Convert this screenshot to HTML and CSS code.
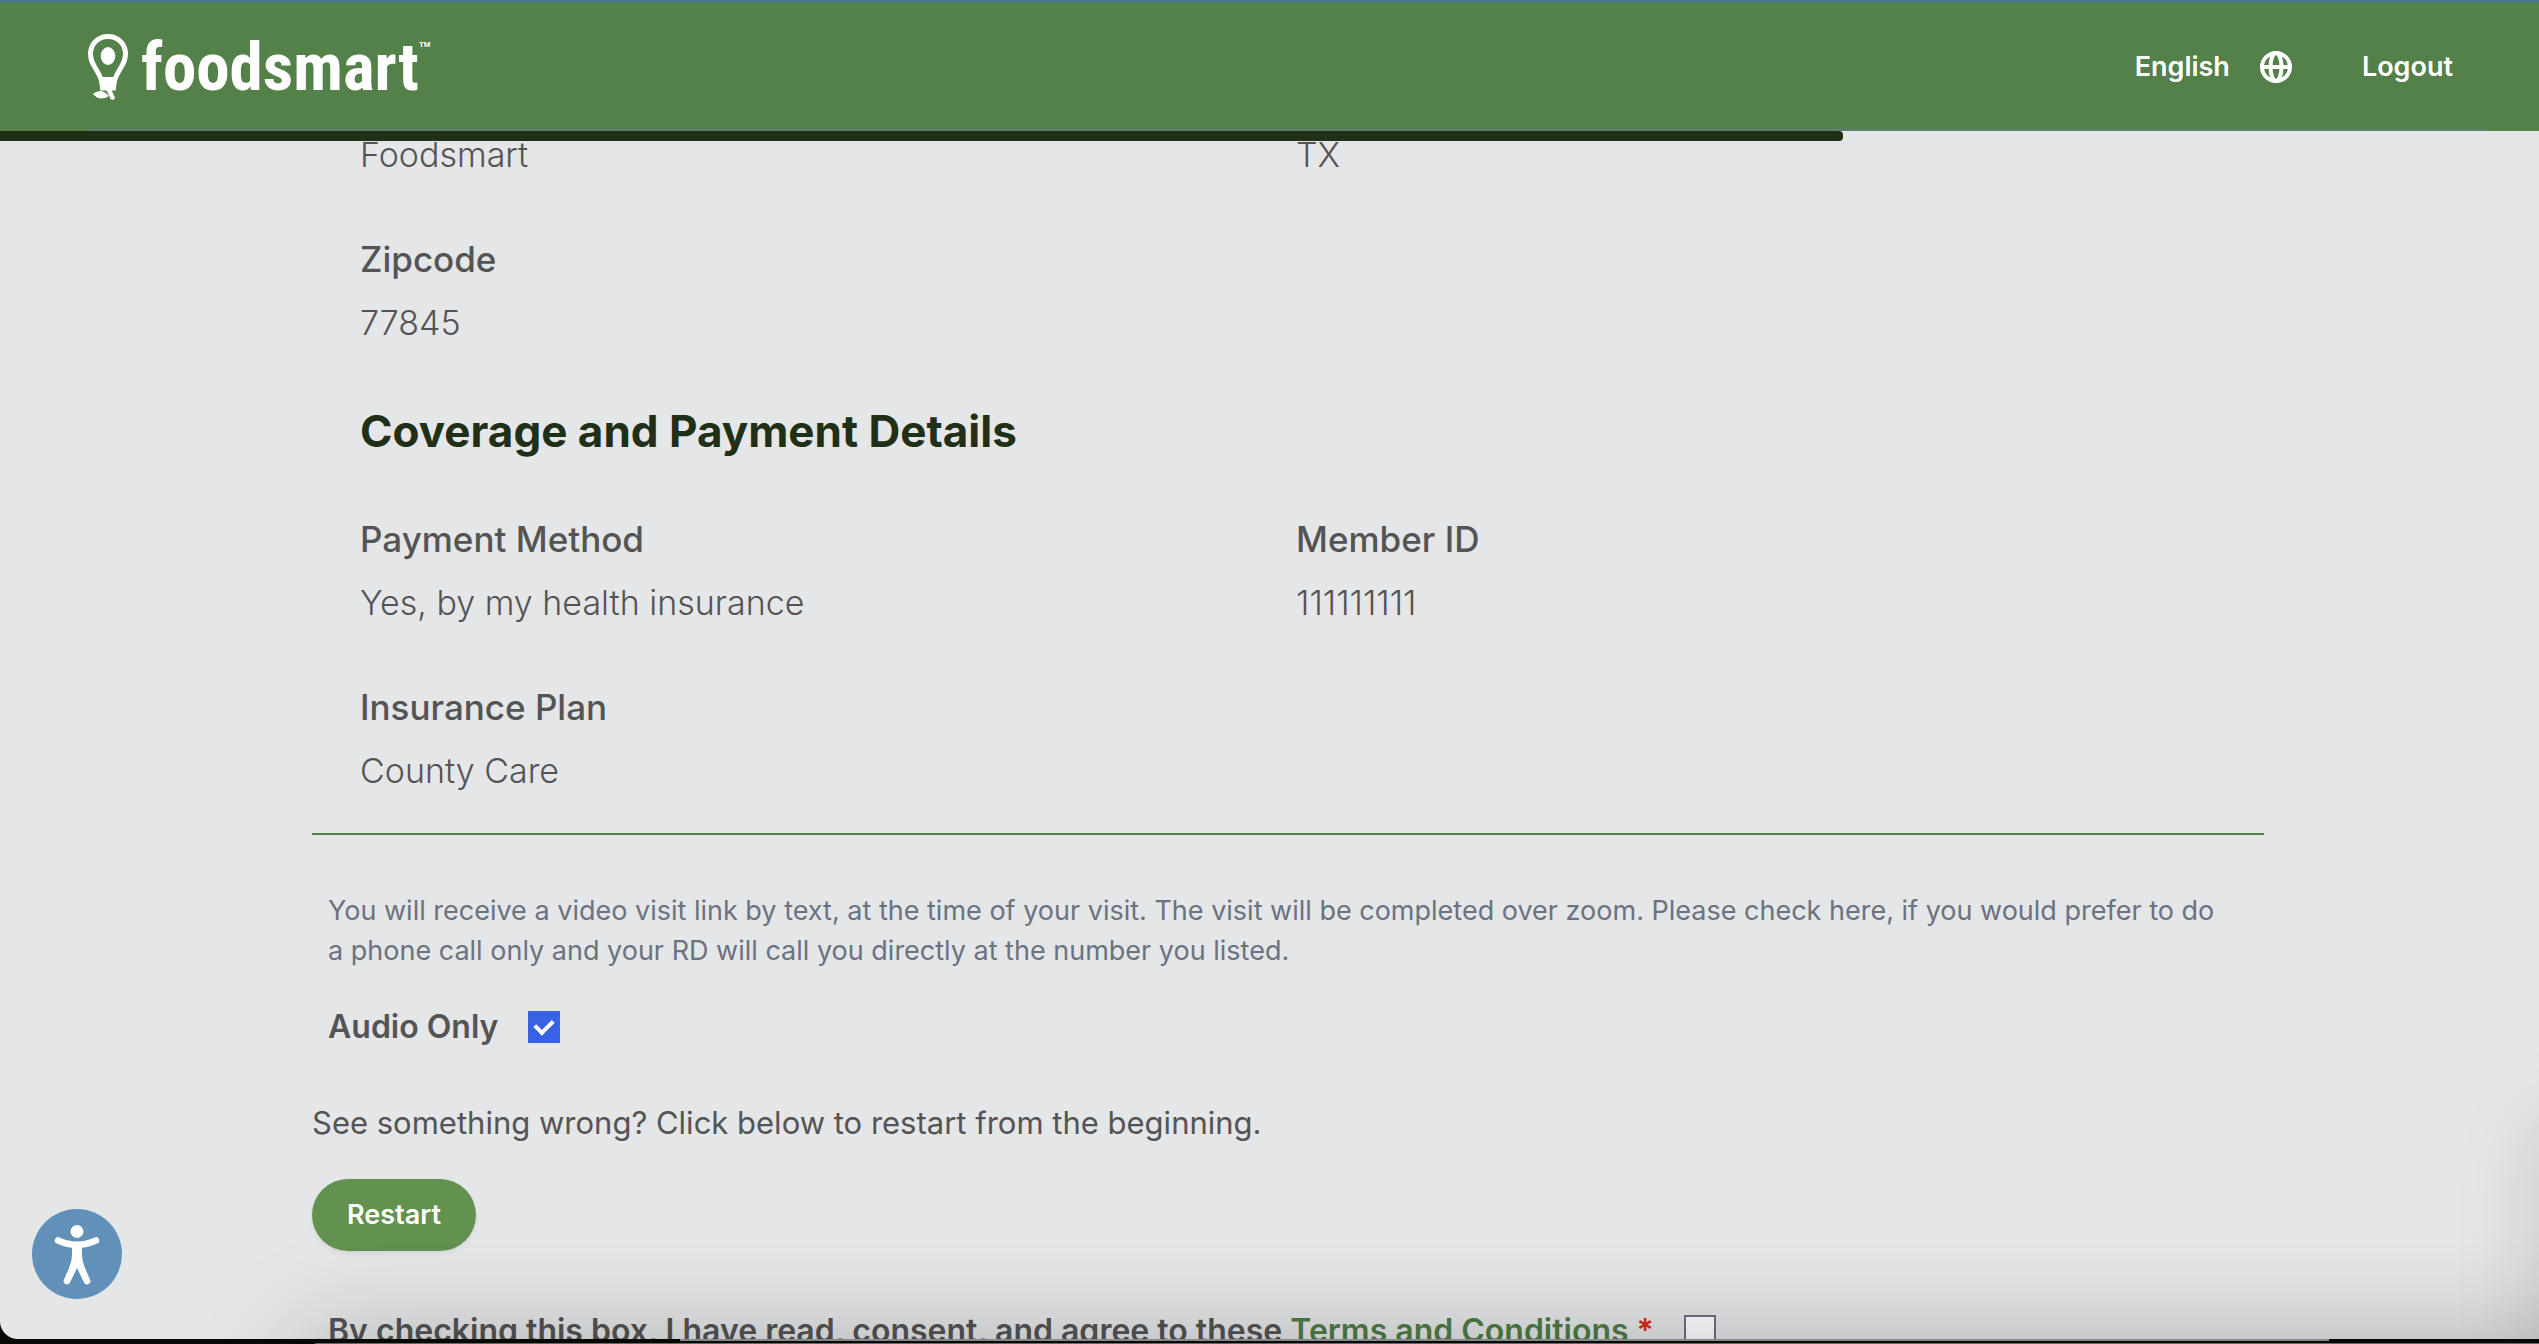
FILE: index.html
```html
<!DOCTYPE html>
<html lang="en">
<head>
<meta charset="utf-8">
<meta name="viewport" content="width=device-width, initial-scale=1">
<title>Foodsmart</title>
<link rel="stylesheet" href="styles.css">
</head>
<body>
<div class="screen">
  <header class="header">
    <a class="logo" href="#" aria-label="foodsmart">
      <svg class="logo-mark" viewBox="0 0 40 66" aria-hidden="true">
        <path fill="none" stroke="#fff" stroke-width="5" d="M20 2.500C10 2.500 2.500 10 2.500 20C2.500 32 11 35 14 49L14.500 54H25.500L26 49C29 35 37.500 32 37.500 20C37.500 10 30 2.500 20 2.500Z"/>
        <ellipse cx="20" cy="22" rx="7.300" ry="9" fill="#fff"/>
        <path fill="#fff" d="M11 43H29L28 51Q27 56 22.500 56H17.500Q12.500 56 12 51Z"/>
        <path fill="none" stroke="#fff" stroke-width="4.500" stroke-linecap="round" d="M20.500 55L24.500 63.500"/>
        <path fill="#fff" d="M5 60Q13 53 21 62Q12 68 5 60Z"/>
      </svg>
      <span class="logo-text">foodsmart</span><span class="logo-tm">TM</span>
    </a>
    <nav class="nav">
      <button class="nav-item" type="button">English
        <svg class="globe" viewBox="0 0 32 32" fill="none" stroke="#fff" stroke-width="4" aria-hidden="true">
          <circle cx="16" cy="16" r="14"/>
          <ellipse cx="16" cy="16" rx="5.500" ry="14"/>
          <path d="M2 16H30"/>
        </svg>
      </button>
      <a class="nav-item" href="#">Logout</a>
    </nav>
  </header>
  <div class="progress"><div class="progress-fill" style="width:72.6%"></div></div>

  <main class="content">
    <section class="details">
      <dl class="grid">
        <div class="field"><dd>Foodsmart</dd></div>
        <div class="field"><dd>TX</dd></div>
        <div class="field"><dt>Zipcode</dt><dd>77845</dd></div>
      </dl>
      <h2 class="title">Coverage and Payment Details</h2>
      <dl class="grid">
        <div class="field"><dt>Payment Method</dt><dd>Yes, by my health insurance</dd></div>
        <div class="field"><dt>Member ID</dt><dd>111111111</dd></div>
        <div class="field"><dt>Insurance Plan</dt><dd>County Care</dd></div>
      </dl>
    </section>

    <section class="visit">
      <p class="note">You will receive a video visit link by text, at the time of your visit. The visit will be completed over zoom. Please check here, if you would prefer to do a phone call only and your RD will call you directly at the number you listed.</p>
      <div class="check-row">
        <label for="audio">Audio Only</label>
        <input class="check" id="audio" type="checkbox" checked>
      </div>
    </section>

    <p class="wrong">See something wrong? Click below to restart from the beginning.</p>
    <button class="restart" type="button">Restart</button>

    <div class="check-row terms">
      <label for="agree">By checking this box, I have read, consent, and agree to these <a href="#">Terms and Conditions</a> <span class="required">*</span></label>
      <input class="check" id="agree" type="checkbox">
    </div>
  </main>

  <button class="a11y" type="button" aria-label="Accessibility options">
    <svg viewBox="0 0 90 90" aria-hidden="true">
      <circle cx="45" cy="22.500" r="6.500" fill="#fff"/>
      <path fill="none" stroke="#fff" stroke-width="6.500" stroke-linecap="round" stroke-linejoin="round" d="M26 31.500Q45 40 64 31.500"/>
      <path fill="#fff" d="M40 35H50V46Q50 52 53 59L58 70.500A3.300 3.300 0 0 1 52 73.500L45 59L38 73.500A3.300 3.300 0 0 1 32 70.500L37 59Q40 52 40 46Z"/>
    </svg>
  </button>
</div>
</body>
</html>
```
FILE: styles.css
```css
* {
  box-sizing: border-box;
}

html,
body {
  height: 100%;
}

body {
  margin: 0;
  background:
    linear-gradient(#85878a, #85878a) 680px calc(100% - 3px) / calc(100% - 890px) 2px no-repeat,
    linear-gradient(#6a6a64, #6a6a64) 315px 100% / 100% 1px no-repeat,
    #0a0805;
  color: #545454;
  font-family: Inter, "Liberation Sans", sans-serif;
  overflow: hidden;
}

button {
  font-family: inherit;
  border: 0;
  cursor: pointer;
}

a {
  color: inherit;
  text-decoration: none;
}

.screen {
  position: relative;
  height: calc(100vh - 5px);
  overflow: hidden;
  background: #e5e6e8;
  border-bottom-left-radius: 18px;
}

/* soft shadows cast by the windows below and to the right */
.screen::before,
.screen::after {
  content: "";
  position: absolute;
  pointer-events: none;
  z-index: 2;
}

.screen::before {
  left: 300px;
  right: -200px;
  top: 100%;
  height: 400px;
  box-shadow: 0 0 100px rgba(0, 0, 0, 0.24);
}

.screen::after {
  left: 100%;
  width: 400px;
  bottom: -300px;
  height: 520px;
  box-shadow: 0 0 80px rgba(0, 0, 0, 0.13);
}

/* header */
.header {
  display: flex;
  align-items: center;
  justify-content: space-between;
  height: 131px;
  padding: 0 86px 0 88px;
  background: linear-gradient(#5c7f72, #5c7f72) 88px 100% / calc(100% - 139px) 2px no-repeat #54804a;
  border-top: 3px solid #467a84;
  color: #fff;
}

.logo {
  display: flex;
  align-items: center;
}

.logo-mark {
  width: 40px;
  height: 66px;
  margin-right: 13px;
}

.logo-text {
  font: bold 67px/68px "Roboto Condensed", Lato, sans-serif;
}

.logo-tm {
  align-self: flex-start;
  font: bold 8px/24px "Liberation Sans", sans-serif;
}

.nav {
  display: flex;
  align-items: center;
  gap: 70px;
}

.nav-item {
  display: flex;
  align-items: center;
  gap: 30px;
  padding: 0;
  background: none;
  color: #fff;
  font-size: 27px;
  line-height: 32px;
  font-weight: 600;
}

.globe {
  width: 32px;
  height: 32px;
}

.progress {
  height: 10px;
  margin-bottom: -10px;
}

.progress-fill {
  height: 10px;
  background: #1f3017;
  border-radius: 0 4px 4px 0;
}

/* page body */
.content {
  padding: 0 275px 0 312px;
}

.details {
  padding: 4px 48px 42px;
  border-bottom: 2px solid #54804a;
}

.grid {
  display: grid;
  grid-template-columns: 1fr 1fr;
  gap: 64px 16px;
  margin: 0;
}

.field dt,
.field dd {
  margin: 0;
  line-height: 40px;
}

.field dt {
  margin-bottom: 24px;
  font-size: 35px;
  font-weight: 500;
}

.field dd {
  font-size: 34px;
  font-weight: 300;
}

.title {
  margin: 60px 0;
  color: #1f3017;
  font-size: 44px;
  line-height: 56px;
  font-weight: 700;
}

.visit {
  padding: 56px 36px 0 16px;
}

.note {
  margin: 0 0 36px;
  color: #6b7280;
  font-size: 27px;
  line-height: 40px;
}

.check-row {
  display: flex;
  align-items: center;
  gap: 30px;
  font-size: 32px;
  line-height: 40px;
  font-weight: 600;
}

.check {
  appearance: none;
  display: grid;
  place-items: center;
  width: 32px;
  height: 32px;
  margin: 0;
  background: #fff;
  border: 2px solid #6b7280;
}

.check:checked {
  background: #3662e3;
  border-color: #3662e3;
}

.check:checked::after {
  content: "";
  width: 8px;
  height: 14px;
  margin-bottom: 4px;
  border: solid #fff;
  border-width: 0 4px 4px 0;
  transform: rotate(45deg);
}

.wrong {
  margin: 56px 0 36px;
  font-size: 31px;
  line-height: 40px;
}

.restart {
  display: block;
  height: 72px;
  padding: 0 35px;
  background: #629150;
  border-radius: 36px;
  box-shadow: 0 2px 4px rgba(0, 0, 0, 0.08);
  color: #fff;
  font-size: 27px;
  line-height: 32px;
  font-weight: 600;
}

.terms {
  padding: 60px 16px 0;
}

.terms a {
  color: #4f7d45;
}

.required {
  color: #dc2a1c;
}

/* floating accessibility button */
.a11y {
  position: absolute;
  left: 32px;
  bottom: 40px;
  width: 90px;
  height: 90px;
  padding: 0;
  background: #6190b8;
  border-radius: 50%;
}

.a11y svg {
  display: block;
  width: 90px;
  height: 90px;
}
```
